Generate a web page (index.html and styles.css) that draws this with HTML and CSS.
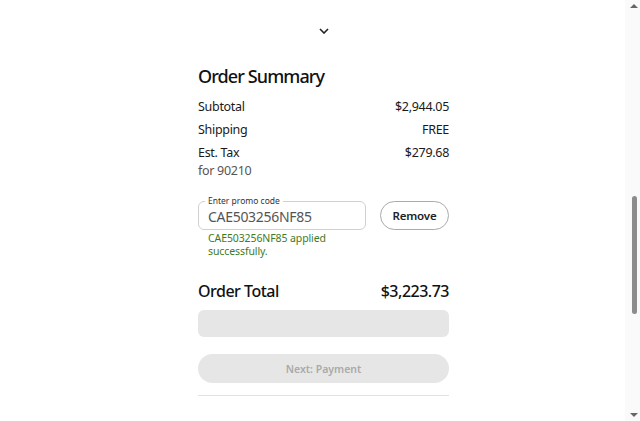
FILE: index.html
```html
<!DOCTYPE html>
<html lang="en">
<head>
<meta charset="utf-8">
<title>Order Summary</title>
<link rel="stylesheet" href="styles.css">
</head>
<body>
<div class="viewport">
  <main class="page">
    <section class="summary">
      <div class="toggle">
        <svg width="10" height="6" viewBox="0 0 10 6"><path d="M1 1l4 4 4-4" fill="none" stroke="#222" stroke-width="1.6"/></svg>
      </div>
      <h2 class="title">Order Summary</h2>
      <div class="row"><span>Subtotal</span><span>$2,944.05</span></div>
      <div class="row"><span>Shipping</span><span>FREE</span></div>
      <div class="row"><span>Est. Tax</span><span>$279.68</span></div>
      <div class="sub">for 90210</div>

      <div class="promo">
        <div class="field">
          <span class="field-label">Enter promo code</span>
          <span class="field-value">CAE503256NF85</span>
        </div>
        <button class="remove">Remove</button>
      </div>
      <div class="success">CAE503256NF85 applied<br>successfully.</div>

      <div class="total"><span>Order Total</span><span>$3,223.73</span></div>
      <div class="placeholder"></div>
      <button class="next" disabled>Next: Payment</button>
      <hr class="rule">
    </section>
  </main>
  <div class="scrollbar">
    <span class="arrow up"></span>
    <div class="track"><div class="thumb"></div></div>
    <span class="arrow down"></span>
  </div>
</div>
</body>
</html>
```
FILE: styles.css
```css
* { box-sizing: border-box; }
html, body { margin: 0; height: 100%; }
body {
  font-family: "Noto Sans", "Open Sans", sans-serif;
  color: #1a1a1a;
  background: #fff;
  letter-spacing: -0.3px;
}
.viewport { display: flex; height: 421px; overflow: hidden; }
.page { flex: 1; padding-top: 24px; }
.toggle { display: flex; justify-content: center; height: 14px; align-items: center; }
.summary { width: 251px; margin: 0 0 0 198px; }
.title { font-size: 18px; font-weight: 500; margin: 26px 0 7px; line-height: 24px; letter-spacing: -0.9px; color: #111; }
.row { display: flex; justify-content: space-between; font-size: 12.5px; line-height: 23px; }
.sub { font-size: 12.5px; line-height: 14px; color: #555; }
.promo { display: flex; align-items: center; justify-content: space-between; margin-top: 23px; }
.field {
  position: relative;
  width: 168px; height: 29px;
  border: 1px solid #d0d0d0; border-radius: 6px;
  display: flex; align-items: center; padding-left: 9px;
}
.field-label {
  position: absolute; left: 6px; top: -6px;
  background: #fff; padding: 0 3px;
  font-size: 8.5px; line-height: 10px; color: #333; letter-spacing: 0;
}
.field-value { font-size: 14px; color: #555; padding-top: 1px; }
.remove {
  width: 69px; height: 29px;
  border: 1px solid #aaa; border-radius: 15px;
  background: #fff; font: 600 11.5px "Noto Sans", sans-serif; color: #222;
  letter-spacing: -0.2px;
}
.success { font-size: 10.5px; line-height: 13px; color: #3f7a1e; margin: 2px 0 0 10px; letter-spacing: -0.1px; }
.total {
  display: flex; justify-content: space-between;
  font-size: 16px; font-weight: 500; line-height: 20px;
  margin-top: 23px; letter-spacing: -0.5px; color: #111;
}
.placeholder { height: 27px; background: #e6e6e6; border-radius: 6px; margin-top: 9px; }
.next {
  display: block; width: 100%; height: 29px; margin-top: 17px;
  border: 0; border-radius: 15px; background: #e6e6e6;
  font: 600 10.5px "Noto Sans", sans-serif; color: #aaa;
}
.rule { border: 0; border-top: 1px solid #e2e2e2; margin: 12px 0 0; }

.scrollbar {
  width: 15px; background: #fafafa;
  display: flex; flex-direction: column; align-items: center;
}
.track { flex: 1; width: 100%; display: flex; justify-content: center; padding-top: 188px; }
.thumb { width: 5px; height: 118px; background: #8c8c8c; border-radius: 3px; margin-left: 3px; }
.arrow { width: 0; height: 0; border-left: 4px solid transparent; border-right: 4px solid transparent; margin-left: 3px; }
.arrow.up { border-bottom: 4px solid #666; margin-top: 4px; }
.arrow.down { border-top: 4px solid #666; margin-bottom: 4px; }
```
